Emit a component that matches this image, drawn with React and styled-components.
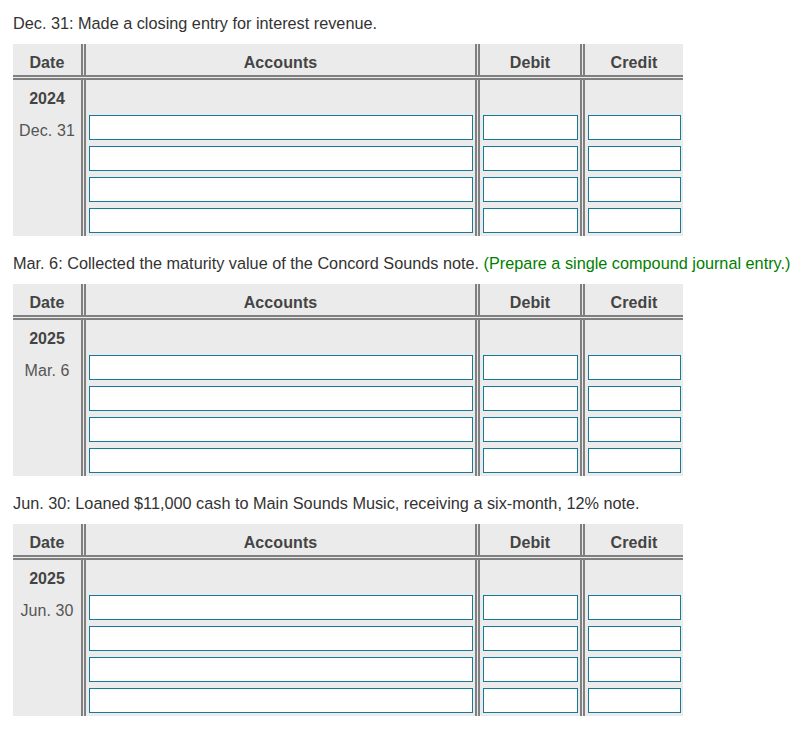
import React from "react";
import styled, { createGlobalStyle } from "styled-components";

const Global = createGlobalStyle`
  html, body { margin: 0; padding: 0; background: #fff; }
  body { font-family: "Liberation Sans", Arial, sans-serif; font-size: 16px; }
`;

const Page = styled.div`
  padding: 14px 0 0 13px;
`;

const Section = styled.section`
  margin-top: ${(p) => (p.$first ? "0" : "18px")};
`;

const Prompt = styled.p`
  margin: 0;
  font-size: 16.25px;
  line-height: 18px;
  color: #333;
  white-space: nowrap;
`;

const Hint = styled.span`
  color: #008000;
`;

const Journal = styled.div`
  margin-top: 12px;
  width: 670px;
  background: #ebebeb;
`;

const cols = "68px 394px 105px 103px";

const HeaderRow = styled.div`
  display: grid;
  grid-template-columns: ${cols};
  border-bottom: 5px double #808080;
`;

const HeaderCell = styled.div`
  box-sizing: border-box;
  height: 31px;
  padding-top: 10px;
  text-align: center;
  font-weight: bold;
  font-size: 16px;
  line-height: 18px;
  letter-spacing: 0.1px;
  color: #444;
  border-left: ${(p) => (p.$first ? "none" : "5px double #808080")};
`;

const BodyRow = styled.div`
  display: grid;
  grid-template-columns: ${cols};
`;

const DateCol = styled.div`
  display: flex;
  flex-direction: column;
`;

const EntryCol = styled.div`
  box-sizing: border-box;
  display: flex;
  flex-direction: column;
  border-left: 5px double #808080;
  padding: 0 2px 0 3px;
`;

const Year = styled.div`
  box-sizing: border-box;
  height: 32px;
  padding-top: 10px;
  text-align: center;
  font-weight: bold;
  line-height: 18px;
  color: #444;
`;

const DateLabel = styled.div`
  box-sizing: border-box;
  height: 31px;
  padding-top: 10px;
  text-align: center;
  line-height: 18px;
  color: #555;
  letter-spacing: 0.1px;
`;

const Spacer = styled.div`
  height: 32px;
`;

const InputRow = styled.div`
  box-sizing: border-box;
  height: 31px;
  padding-top: 3px;
`;

const Field = styled.input`
  display: block;
  box-sizing: border-box;
  width: 100%;
  height: 25px;
  margin: 0;
  padding: 0 4px;
  border: 1px solid #16799a;
  border-radius: 0;
  background: #fff;
  font-family: "Liberation Sans", Arial, sans-serif;
  font-size: 14px;
  outline: none;
`;

const ROWS = [0, 1, 2, 3];

function Column({ name }) {
  return (
    <EntryCol>
      <Spacer />
      {ROWS.map((r) => (
        <InputRow key={r}>
          <Field type="text" aria-label={`${name} ${r + 1}`} />
        </InputRow>
      ))}
    </EntryCol>
  );
}

function JournalTable({ year, date }) {
  return (
    <Journal>
      <HeaderRow>
        <HeaderCell $first>Date</HeaderCell>
        <HeaderCell>Accounts</HeaderCell>
        <HeaderCell>Debit</HeaderCell>
        <HeaderCell>Credit</HeaderCell>
      </HeaderRow>
      <BodyRow>
        <DateCol>
          <Year>{year}</Year>
          <DateLabel>{date}</DateLabel>
        </DateCol>
        <Column name="Account" />
        <Column name="Debit" />
        <Column name="Credit" />
      </BodyRow>
    </Journal>
  );
}

const entries = [
  {
    text: "Dec. 31: Made a closing entry for interest revenue.",
    year: "2024",
    date: "Dec. 31",
  },
  {
    text: "Mar. 6: Collected the maturity value of the Concord Sounds note.",
    hint: "(Prepare a single compound journal entry.)",
    year: "2025",
    date: "Mar. 6",
  },
  {
    text: "Jun. 30: Loaned $11,000 cash to Main Sounds Music, receiving a six-month, 12% note.",
    year: "2025",
    date: "Jun. 30",
  },
];

export default function App() {
  return (
    <>
      <Global />
      <Page>
        {entries.map((e, i) => (
          <Section key={i} $first={i === 0}>
            <Prompt>
              {e.text}
              {e.hint ? (
                <>
                  {" "}
                  <Hint>{e.hint}</Hint>
                </>
              ) : null}
            </Prompt>
            <JournalTable year={e.year} date={e.date} />
          </Section>
        ))}
      </Page>
    </>
  );
}
